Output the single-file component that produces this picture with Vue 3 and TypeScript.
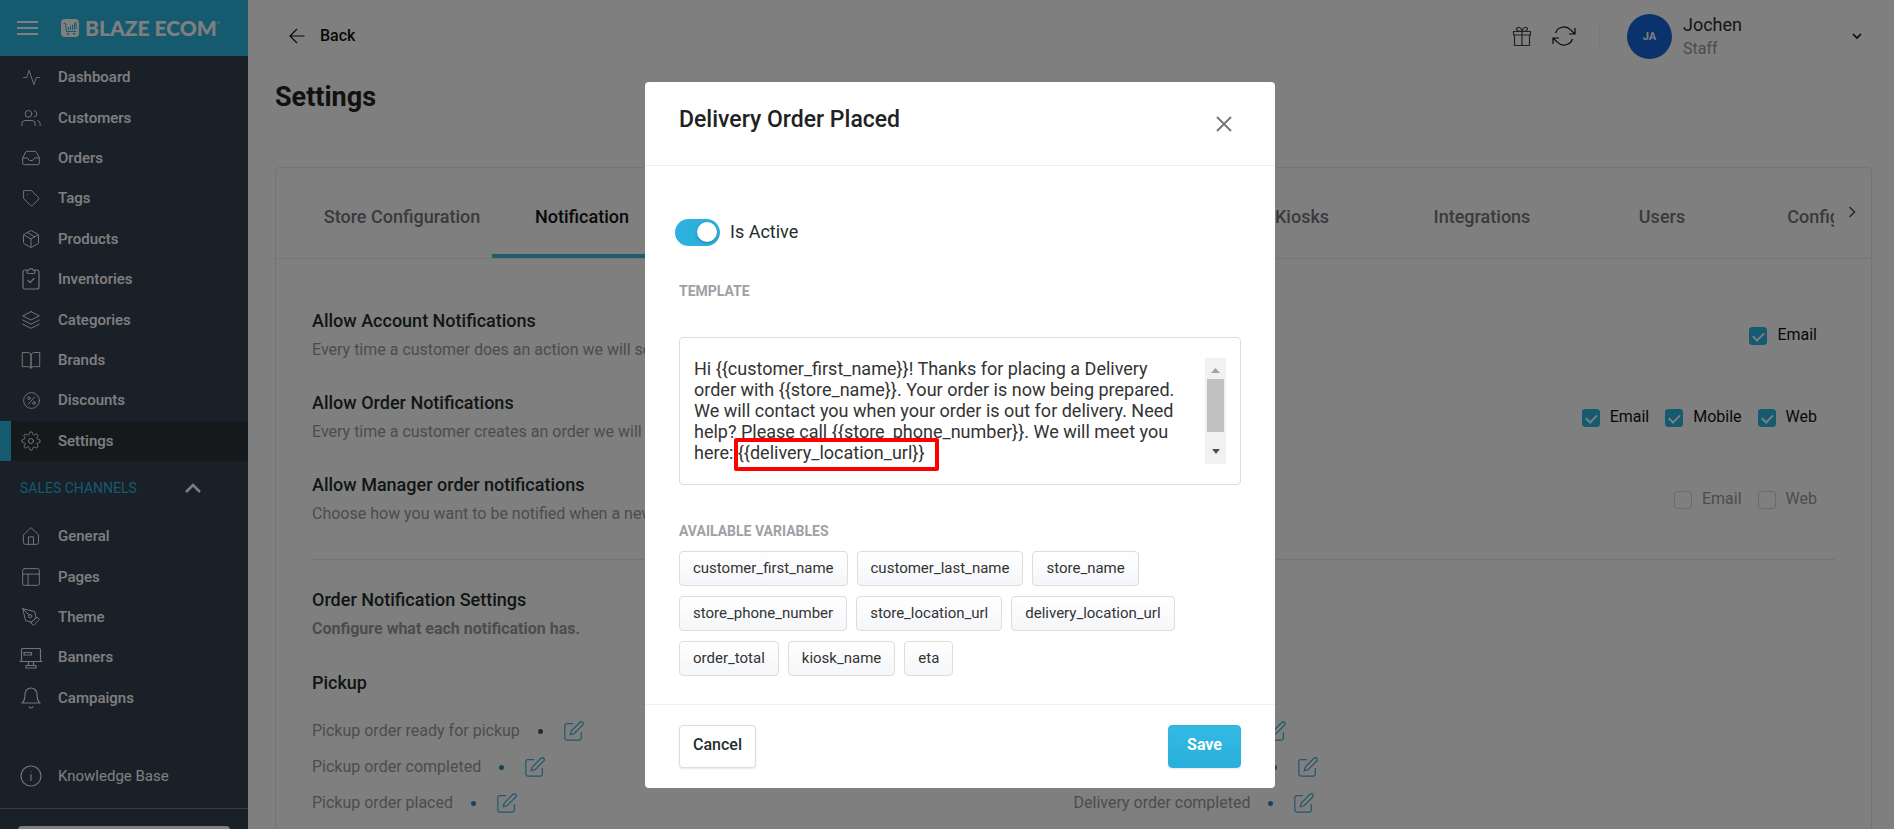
<script setup lang="ts">
import { ref } from 'vue'

interface NavItem {
  label: string
  icon: string
  size: number
  active?: boolean
}
interface Choice {
  label: string
  checked: boolean
}
interface Preference {
  title: string
  text: string
  disabled?: boolean
  choices: Choice[]
}
interface Notice {
  label: string
  enabled: boolean
}

const icons: Record<string, string> = {
  activity: '<path d="M22 12h-4l-3 9L9 3l-3 9H2"/>',
  users: '<path d="M17 21v-2a4 4 0 0 0-4-4H5a4 4 0 0 0-4 4v2"/><circle cx="9" cy="7" r="4"/><path d="M23 21v-2a4 4 0 0 0-3-3.87M16 3.13a4 4 0 0 1 0 7.75"/>',
  inbox: '<path d="M22 12h-6l-2 3h-4l-2-3H2"/><path d="M5.45 5.11 2 12v6a2 2 0 0 0 2 2h16a2 2 0 0 0 2-2v-6l-3.45-6.89A2 2 0 0 0 16.76 4H7.24a2 2 0 0 0-1.79 1.11z"/>',
  tag: '<path d="M20.59 13.41l-7.17 7.17a2 2 0 0 1-2.83 0L2 12V2h10l8.59 8.59a2 2 0 0 1 0 2.82z"/><path d="M7 7h.01"/>',
  box: '<path d="M16.5 9.4l-9-5.19M21 16V8a2 2 0 0 0-1-1.73l-7-4a2 2 0 0 0-2 0l-7 4A2 2 0 0 0 3 8v8a2 2 0 0 0 1 1.73l7 4a2 2 0 0 0 2 0l7-4A2 2 0 0 0 21 16z"/><path d="M3.27 6.96 12 12.01l8.73-5.05M12 22.08V12"/>',
  clipboard: '<path d="M16 3h2a2 2 0 0 1 2 2v15a2 2 0 0 1-2 2H6a2 2 0 0 1-2-2V5a2 2 0 0 1 2-2h2"/><path d="M8 3.5h1.5a2.6 2.6 0 0 1 5 0H16V5a1.5 1.5 0 0 1-1.5 1.5h-5A1.5 1.5 0 0 1 8 5z"/><path d="M9 13.5l2.2 2 3.8-4"/>',
  layers: '<path d="M12 2 2 7l10 5 10-5-10-5zM2 17l10 5 10-5M2 12l10 5 10-5"/>',
  book: '<path d="M2 3h6a4 4 0 0 1 4 4v15a3 3 0 0 0-3-2H2zM22 3h-6a4 4 0 0 0-4 4v15a3 3 0 0 1 3-2h7z"/>',
  percent: '<circle cx="12" cy="12" r="10"/><path d="M16 7.5 8 16.5"/><circle cx="8.8" cy="9" r="1.7"/><circle cx="15.2" cy="15.2" r="1.7"/>',
  settings: '<circle cx="12" cy="12" r="3"/><path d="M19.4 15a1.65 1.65 0 0 0 .33 1.82l.06.06a2 2 0 1 1-2.83 2.83l-.06-.06a1.65 1.65 0 0 0-2.8 1.17V21a2 2 0 0 1-4 0v-.09A1.65 1.65 0 0 0 7.18 19.73l-.06.06a2 2 0 1 1-2.83-2.83l.06-.06A1.65 1.65 0 0 0 3.09 14H3a2 2 0 0 1 0-4h.09A1.65 1.65 0 0 0 4.27 7.18l-.06-.06a2 2 0 1 1 2.83-2.83l.06.06A1.65 1.65 0 0 0 10 3.09V3a2 2 0 0 1 4 0v.09a1.65 1.65 0 0 0 2.82 1.18l.06-.06a2 2 0 1 1 2.83 2.83l-.06.06A1.65 1.65 0 0 0 20.91 10H21a2 2 0 0 1 0 4h-.09a1.65 1.65 0 0 0-1.51 1z"/>',
  home: '<path d="M3 10.5 12 2l9 8.5V20a2 2 0 0 1-2 2H5a2 2 0 0 1-2-2z"/><path d="M9 22v-9h6v9"/>',
  layout: '<rect x="2" y="2" width="20" height="20" rx="2"/><path d="M2 8.5h20M8.5 22V8.5"/>',
  pen: '<path d="M12 19l7-7 3 3-7 7-3-3z"/><path d="M18 13l-1.5-7.5L2 2l3.5 14.5L13 18l5-5zM2 2l7.586 7.586"/><circle cx="11" cy="11" r="2"/>',
  monitor: '<path d="M2.5 16V4.500a1 1 0 0 1 1-1h17a1 1 0 0 1 1 1V16M1 16.500h22M9.500 17v3.500M14.500 17v3.500M7 20.500h10V23H7z"/><path d="M5 7.500h7.500V10H5z"/>',
  bell: '<path d="M18 8A6 6 0 0 0 6 8c0 7-3 9-3 9h18s-3-2-3-9M13.73 21a2 2 0 0 1-3.46 0"/>',
  info: '<circle cx="12" cy="12" r="10"/><path d="M12 16.5v-6M12 7.5h.01"/>',
}

const mainNav: NavItem[] = [
  { label: 'Dashboard', icon: 'activity', size: 19 },
  { label: 'Customers', icon: 'users', size: 20 },
  { label: 'Orders', icon: 'inbox', size: 20 },
  { label: 'Tags', icon: 'tag', size: 19 },
  { label: 'Products', icon: 'box', size: 20 },
  { label: 'Inventories', icon: 'clipboard', size: 24 },
  { label: 'Categories', icon: 'layers', size: 20 },
  { label: 'Brands', icon: 'book', size: 20 },
  { label: 'Discounts', icon: 'percent', size: 19 },
  { label: 'Settings', icon: 'settings', size: 20, active: true },
]
const channelNav: NavItem[] = [
  { label: 'General', icon: 'home', size: 20 },
  { label: 'Pages', icon: 'layout', size: 20 },
  { label: 'Theme', icon: 'pen', size: 20 },
  { label: 'Banners', icon: 'monitor', size: 24 },
  { label: 'Campaigns', icon: 'bell', size: 24 },
]

const tabs = [
  { label: 'Store Configuration', column: 1 },
  { label: 'Notification', column: 2, active: true },
  { label: 'Kiosks', column: 6 },
  { label: 'Integrations', column: 7 },
  { label: 'Users', column: 8 },
  { label: 'Configuration', column: 9 },
]

const preferences = ref<Preference[]>([
  {
    title: 'Allow Account Notifications',
    text: 'Every time a customer does an action we will send a notification',
    choices: [{ label: 'Email', checked: true }],
  },
  {
    title: 'Allow Order Notifications',
    text: 'Every time a customer creates an order we will send a notification',
    choices: [
      { label: 'Email', checked: true },
      { label: 'Mobile', checked: true },
      { label: 'Web', checked: true },
    ],
  },
  {
    title: 'Allow Manager order notifications',
    text: 'Choose how you want to be notified when a new order is created',
    disabled: true,
    choices: [
      { label: 'Email', checked: false },
      { label: 'Web', checked: false },
    ],
  },
])

const groups: { title: string; items: Notice[] }[] = [
  {
    title: 'Pickup',
    items: [
      { label: 'Pickup order ready for pickup', enabled: false },
      { label: 'Pickup order completed', enabled: true },
      { label: 'Pickup order placed', enabled: true },
    ],
  },
  {
    title: 'Delivery',
    items: [
      { label: 'Delivery order placed', enabled: true },
      { label: 'Delivery order dispatched', enabled: true },
      { label: 'Delivery order completed', enabled: true },
    ],
  },
]

const isActive = ref(true)
const template = ref(
  'Hi {{customer_first_name}}! Thanks for placing a Delivery order with {{store_name}}. Your order is now being prepared. We will contact you when your order is out for delivery. Need help? Please call {{store_phone_number}}. We will meet you here: {{delivery_location_url}}',
)
const variables = [
  'customer_first_name',
  'customer_last_name',
  'store_name',
  'store_phone_number',
  'store_location_url',
  'delivery_location_url',
  'order_total',
  'kiosk_name',
  'eta',
]
</script>

<template>
  <div class="app">
    <aside class="sidebar">
      <header class="brand">
        <button class="menu" type="button" aria-label="Menu"><span></span><span></span><span></span></button>
        <svg class="brand-mark" width="18" height="18" viewBox="0 0 18 18" aria-hidden="true">
          <rect width="18" height="18" rx="4" fill="#fff" />
          <g fill="none" stroke="#2cb4df" stroke-width="1" stroke-linecap="round">
            <path d="M3 4.500h1.500l1 8h9.500M7.500 10.500V8.500M9.500 10.500V7.500M11.500 10.500V6M13.500 10.500V4.500M15 3.500v6" />
            <circle cx="7" cy="14.800" r="0.700" /><circle cx="13" cy="14.800" r="0.700" />
          </g>
        </svg>
        <span class="brand-name">BLAZE ECOM</span>
        <span class="brand-dot"></span>
      </header>

      <nav class="nav nav-main" aria-label="Main">
        <a v-for="item in mainNav" :key="item.label" href="#" class="nav-item" :class="{ active: item.active }">
          <span class="nav-icon"><svg :width="item.size" :height="item.size" viewBox="0 0 24 24" v-html="icons[item.icon]"></svg></span>
          {{ item.label }}
        </a>
      </nav>
      <button class="section" type="button" aria-expanded="true">
        SALES CHANNELS
        <svg width="18" height="12" viewBox="0 0 18 12" aria-hidden="true"><path d="M2 10l7-7 7 7" /></svg>
      </button>
      <nav class="nav nav-channels" aria-label="Sales channels">
        <a v-for="item in channelNav" :key="item.label" href="#" class="nav-item">
          <span class="nav-icon"><svg :width="item.size" :height="item.size" viewBox="0 0 24 24" v-html="icons[item.icon]"></svg></span>
          {{ item.label }}
        </a>
      </nav>
      <a href="#" class="nav-item knowledge">
        <span class="nav-icon"><svg width="24" height="24" viewBox="0 0 24 24" v-html="icons.info"></svg></span>
        Knowledge Base
      </a>
      <footer class="side-footer"><button type="button" aria-label="Open store"></button></footer>
    </aside>

    <main class="main">
      <header class="topbar">
        <a href="#" class="back">
          <svg class="line" width="18" height="18" viewBox="0 0 18 18" aria-hidden="true"><path d="M16.500 9H2M9 2L2 9l7 7" /></svg>
          Back
        </a>
        <div class="tools">
          <button class="plain gift" type="button" aria-label="Gifts">
            <svg class="line" width="20" height="22" viewBox="0 0 20 22" aria-hidden="true">
              <path d="M2.500 10v10.500h15V10M1.500 6.500h17V10h-17zM10 6.500v14M10 6.500C8 6.500 4.500 6 4.500 4S8.500.5 10 6.500C11.500.5 15.500 2 15.500 4S12 6.500 10 6.500" />
            </svg>
          </button>
          <button class="plain" type="button" aria-label="Refresh">
            <svg class="line" width="24" height="24" viewBox="0 0 24 24" aria-hidden="true">
              <path d="M23 4v6h-6M1 20v-6h6M3.510 9a9 9 0 0 1 14.850-3.360L23 10M1 14l4.640 4.360A9 9 0 0 0 20.490 15" />
            </svg>
          </button>
        </div>
        <button class="account" type="button">
          <span class="avatar">JA</span>
          <span class="person"><span class="name">Jochen</span><span class="role">Staff</span></span>
          <svg class="line bold" width="10" height="7" viewBox="0 0 10 7" aria-hidden="true"><path d="M1 1l4 4 4-4" /></svg>
        </button>
      </header>

      <h1>Settings</h1>

      <section class="card">
        <div class="tabbar">
          <div class="tabs" role="tablist">
            <button
              v-for="tab in tabs"
              :key="tab.label"
              type="button"
              role="tab"
              class="tab"
              :class="{ current: tab.active }"
              :aria-selected="!!tab.active"
              :style="{ gridColumn: tab.column }"
            >
              {{ tab.label }}
            </button>
          </div>
          <button class="plain more" type="button" aria-label="More tabs">
            <svg class="line" width="8" height="12" viewBox="0 0 8 12" aria-hidden="true"><path d="M1.500 1l5 5-5 5" /></svg>
          </button>
        </div>

        <div class="card-body">
          <div v-for="pref in preferences" :key="pref.title" class="pref">
            <div>
              <h2>{{ pref.title }}</h2>
              <p>{{ pref.text }}</p>
            </div>
            <div class="choices" :class="{ disabled: pref.disabled }">
              <label v-for="choice in pref.choices" :key="choice.label">
                <input v-model="choice.checked" type="checkbox" :disabled="pref.disabled" />
                {{ choice.label }}
              </label>
            </div>
          </div>

          <div class="order-settings">
            <h2>Order Notification Settings</h2>
            <p class="strong">Configure what each notification has.</p>
            <div class="groups">
              <div v-for="group in groups" :key="group.title">
                <h2>{{ group.title }}</h2>
                <ul>
                  <li v-for="item in group.items" :key="item.label">
                    {{ item.label }}
                    <span class="dot" :class="{ on: item.enabled }"></span>
                    <button class="plain" type="button" :aria-label="'Edit ' + item.label">
                      <svg class="edit" width="22" height="22" viewBox="0 0 24 24" aria-hidden="true">
                        <path d="M11 4H4a2 2 0 0 0-2 2v14a2 2 0 0 0 2 2h14a2 2 0 0 0 2-2v-7" />
                        <path d="M18.500 2.500a2.121 2.121 0 0 1 3 3L12 15l-4 1 1-4z" />
                      </svg>
                    </button>
                  </li>
                </ul>
              </div>
            </div>
          </div>
        </div>
      </section>
    </main>

    <div class="overlay">
      <section class="modal" role="dialog" aria-modal="true" aria-labelledby="modal-title">
        <header class="modal-head">
          <h3 id="modal-title">Delivery Order Placed</h3>
          <button class="plain" type="button" aria-label="Close">
            <svg width="16" height="16" viewBox="0 0 16 16" aria-hidden="true"><path d="M1 1l14 14M15 1L1 15" /></svg>
          </button>
        </header>
        <div class="modal-body">
          <label class="toggle"><input v-model="isActive" type="checkbox" role="switch" />Is Active</label>
          <label class="caption" for="template">TEMPLATE</label>
          <div class="editor">
            <textarea id="template" v-model="template" spellcheck="false"></textarea>
            <div class="scroll" aria-hidden="true">
              <svg width="9" height="6" viewBox="0 0 9 6"><path d="M0 6l4.500-5L9 6z" fill="#a3a3a3" /></svg>
              <span class="thumb"></span>
              <svg width="8" height="6" viewBox="0 0 8 6"><path d="M0 0l4 5 4-5z" fill="#505050" /></svg>
            </div>
            <span class="highlight"></span>
          </div>
          <h4 class="caption">AVAILABLE VARIABLES</h4>
          <div class="chips">
            <button v-for="name in variables" :key="name" type="button">{{ name }}</button>
          </div>
        </div>
        <footer class="modal-foot">
          <button class="cancel" type="button">Cancel</button>
          <button class="save" type="button">Save</button>
        </footer>
      </section>
    </div>
  </div>
</template>

<style>
body {
  background: #fff;
}
</style>

<style scoped>
* {
  box-sizing: border-box;
}
.app {
  display: flex;
  height: 100vh;
  overflow: hidden;
  font: 400 16px/20px Roboto, 'Liberation Sans', sans-serif;
  color: #1f2d2d;
}
button {
  font: inherit;
  color: inherit;
  cursor: pointer;
}
a {
  color: inherit;
  text-decoration: none;
}
h1,
h2,
h3,
h4,
p,
ul {
  margin: 0;
  padding: 0;
}
.plain {
  display: flex;
  padding: 0;
  border: 0;
  background: none;
}
.line {
  fill: none;
  stroke: #111;
  stroke-width: 1.2;
}
.bold {
  stroke-width: 1.6;
}

.sidebar {
  display: flex;
  flex-direction: column;
  flex: 0 0 248px;
  background: #334050;
  color: #fff;
}
.brand {
  display: flex;
  align-items: center;
  flex: 0 0 56px;
  margin-bottom: 1px;
  padding: 0 17px;
  background: #2cb4df;
}
.menu {
  display: grid;
  gap: 4px;
  width: 21px;
  margin-right: 23px;
  padding: 0;
  border: 0;
  background: none;
}
.menu span {
  height: 2px;
  background: #fff;
}
.brand-name {
  margin-left: 6px;
  font: 900 21px/24px Lato, sans-serif;
}
.brand-dot {
  width: 3px;
  height: 3px;
  margin-bottom: 12px;
  border-radius: 50%;
  background: #8fd6ee;
}
.nav {
  display: grid;
  flex: none;
  grid-auto-rows: 1fr;
}
.nav-main {
  height: 404px;
}
.nav-channels {
  height: 202px;
}
.nav-item {
  display: flex;
  align-items: center;
  gap: 15px;
  padding-left: 19px;
  font-size: 15px;
  font-weight: 500;
}
.nav-item.active {
  padding-left: 8px;
  border-left: 11px solid #2cb4df;
  background: #2a3338;
}
.nav-icon {
  display: flex;
  justify-content: center;
  width: 24px;
}
.nav-icon svg {
  fill: none;
  stroke: #e4e8ec;
  stroke-width: 1.2;
  stroke-linecap: round;
  stroke-linejoin: round;
}
.section {
  display: flex;
  align-items: center;
  justify-content: space-between;
  flex: 0 0 54px;
  margin-bottom: 1px;
  padding: 0 46px 0 20px;
  border: 0;
  background: none;
  color: #2cb4df;
  font-size: 14px;
}
.section svg {
  fill: none;
  stroke: #fff;
  stroke-width: 2.5;
}
.knowledge {
  flex: 0 0 40px;
  margin-top: 38px;
  font-weight: 400;
}
.side-footer {
  flex: 1 0 auto;
  margin-top: 12px;
  padding: 17px 18px 0;
  border-top: 1px solid #6b747f;
}
.side-footer button {
  display: block;
  width: 100%;
  height: 40px;
  border: 0;
  border-radius: 4px;
  background: #fff;
}

.main {
  flex: 1;
  min-width: 0;
  padding: 0 22px 0 27px;
}
.topbar {
  display: flex;
  align-items: center;
  height: 72px;
}
.back {
  display: flex;
  align-items: center;
  gap: 14px;
  margin-left: 13px;
  font-weight: 500;
  color: #111;
}
.tools {
  display: flex;
  align-items: center;
  gap: 20px;
  height: 28px;
  margin-left: auto;
  padding-right: 23px;
  border-right: 1px solid #eee;
}
.gift .line {
  stroke: #444;
}
.account {
  display: flex;
  align-items: center;
  width: 255px;
  margin-left: 17px;
  padding: 0 0 0 10px;
  border: 0;
  background: none;
  text-align: left;
}
.account svg {
  margin: 0 10px 0 auto;
}
.avatar {
  width: 45px;
  margin-right: 11px;
  border-radius: 50%;
  background: #1465d8;
  color: #fff;
  font-size: 11px;
  font-weight: 700;
  line-height: 45px;
  text-align: center;
}
.person {
  display: grid;
}
.name {
  font-size: 18px;
  line-height: 25px;
}
.role {
  line-height: 24px;
  color: #98989c;
}
h1 {
  margin-top: 8px;
  font-size: 27px;
  font-weight: 700;
  line-height: 34px;
  color: #222;
}
.card {
  height: 900px;
  margin-top: 53px;
  border: 1px solid #e9e9ec;
  border-radius: 4px;
}
.tabbar {
  display: flex;
  align-items: flex-start;
  padding: 0 15px 0 36px;
  border-bottom: 1px solid #e9e9ec;
}
.tabs {
  display: grid;
  grid-template-columns: repeat(9, 180px);
  flex: 1;
  min-width: 0;
  overflow: hidden;
}
.tab {
  height: 90px;
  padding: 12px 0 0;
  border: 0;
  border-bottom: 4px solid transparent;
  background: none;
  color: #75757a;
  font-size: 18px;
  font-weight: 500;
  white-space: nowrap;
}
.tab.current {
  border-color: #4bb3dc;
  color: #111;
}
.more {
  margin: 38px 0 0 14px;
}
.more .line {
  stroke: #555;
  stroke-width: 1.6;
}
.card-body {
  padding: 49px 36px 0;
}
h2 {
  font-size: 18px;
  font-weight: 500;
  line-height: 26px;
}
p {
  line-height: 32px;
  color: #98989c;
}
.pref {
  display: flex;
  justify-content: space-between;
  height: 82px;
}
.choices {
  display: flex;
  gap: 16px;
  height: 54px;
  padding-right: 18px;
}
.choices label {
  display: flex;
  align-items: center;
  gap: 10px;
  color: #111;
}
.choices.disabled label {
  color: #98989c;
}
.choices input {
  width: 18px;
  height: 18px;
  margin: 2px 0 0;
  border: 1px solid #d4d4d8;
  border-radius: 3px;
  background: #fff;
  appearance: none;
}
.choices input:checked {
  border-color: #2cb4df;
  background: #2cb4df;
}
.choices input:checked::after {
  display: block;
  width: 9px;
  height: 5px;
  margin: 4px 0 0 3px;
  border: solid #fff;
  border-width: 0 0 2px 2px;
  content: '';
  transform: rotate(-45deg);
}
.order-settings {
  margin-top: 5px;
  padding-top: 27px;
  border-top: 1px solid #e9e9ec;
}
.strong {
  font-weight: 700;
}
.groups {
  display: grid;
  grid-template-columns: 1fr 1fr;
  margin-top: 25px;
}
ul {
  margin-top: 17px;
  list-style: none;
}
li {
  display: flex;
  align-items: center;
  height: 36px;
  color: #98989c;
}
.dot {
  width: 5px;
  height: 5px;
  margin: 0 20px 0 18px;
  border-radius: 50%;
  background: #555;
}
.dot.on {
  background: #2191b5;
}
.edit {
  fill: none;
  stroke: #3fb0d6;
  stroke-width: 1.3;
}

.overlay {
  position: fixed;
  inset: 0;
  display: flex;
  align-items: flex-start;
  justify-content: center;
  padding: 82px 0 0 26px;
  background: rgba(0, 0, 0, 0.5);
}
.modal {
  width: 630px;
  border-radius: 4px;
  background: #fff;
}
.modal-head {
  display: flex;
  align-items: center;
  justify-content: space-between;
  height: 84px;
  padding: 0 43px 0 34px;
  border-bottom: 1px solid #eee;
}
.modal-head h3 {
  padding-bottom: 8px;
  font-size: 23px;
  font-weight: 500;
  line-height: 28px;
  color: #222;
}
.modal-head svg {
  fill: none;
  stroke: #777;
  stroke-width: 2;
}
.modal-body {
  padding: 48px 34px 28px;
}
.toggle {
  display: flex;
  align-items: center;
  gap: 10px;
  margin-left: -4px;
  font-size: 18px;
  line-height: 36px;
}
.toggle input {
  width: 45px;
  height: 27px;
  margin: 0;
  padding: 3px;
  border-radius: 14px;
  background: #2cb1de;
  appearance: none;
}
.toggle input::after {
  display: block;
  width: 20px;
  height: 20px;
  border-radius: 50%;
  background: #fff;
  box-shadow: 0 1px 3px rgba(0, 0, 0, 0.3);
  content: '';
}
.toggle input:checked::after {
  margin-left: auto;
}
.caption {
  display: block;
  font-size: 14px;
  font-weight: 700;
  line-height: 20px;
  color: #a0a0a6;
}
label.caption {
  margin-top: 31px;
}
.editor {
  position: relative;
  display: flex;
  margin-top: 36px;
  padding: 20px 14px;
  border: 1px solid #deded2;
  border-radius: 4px;
}
textarea {
  flex: 1;
  height: 106px;
  padding: 0 20px 0 0;
  border: 0;
  outline: 0;
  overflow: hidden;
  background: none;
  color: #333;
  font: 400 18px/21px Roboto, 'Liberation Sans', sans-serif;
  resize: none;
}
.scroll {
  display: flex;
  flex-direction: column;
  align-items: center;
  width: 21px;
  height: 106px;
  padding: 9px 0;
  background: #f1f1f1;
}
.thumb {
  width: 17px;
  height: 54px;
  margin: 6px 0 17px;
  background: #c1c1c1;
}
.highlight {
  position: absolute;
  top: 100px;
  left: 54px;
  width: 205px;
  height: 33px;
  border: 4px solid #f00;
  border-radius: 2px;
}
h4.caption {
  margin-top: 36px;
}
.chips {
  display: flex;
  flex-wrap: wrap;
  gap: 9px;
  row-gap: 10px;
  margin-top: 10px;
}
.chips button {
  height: 35px;
  padding: 0 13px 2px;
  border: 1px solid #deded6;
  border-radius: 4px;
  background: linear-gradient(#fff, #f5f6fa);
  color: #333;
  font-size: 15px;
}
.modal-foot {
  display: flex;
  justify-content: space-between;
  padding: 20px 34px;
  border-top: 1px solid #f0f0f5;
}
.modal-foot button {
  height: 43px;
  padding: 0 13px 3px;
  border: 1px solid #deded6;
  border-radius: 4px;
  background: #fff;
  box-shadow: 0 1px 2px rgba(0, 0, 0, 0.1);
  font-weight: 500;
}
.modal-foot .save {
  padding: 0 18px 3px;
  border-color: #2cb4df;
  background: linear-gradient(#32bae4, #2aaedb);
  color: #fff;
  font-weight: 700;
}
</style>
